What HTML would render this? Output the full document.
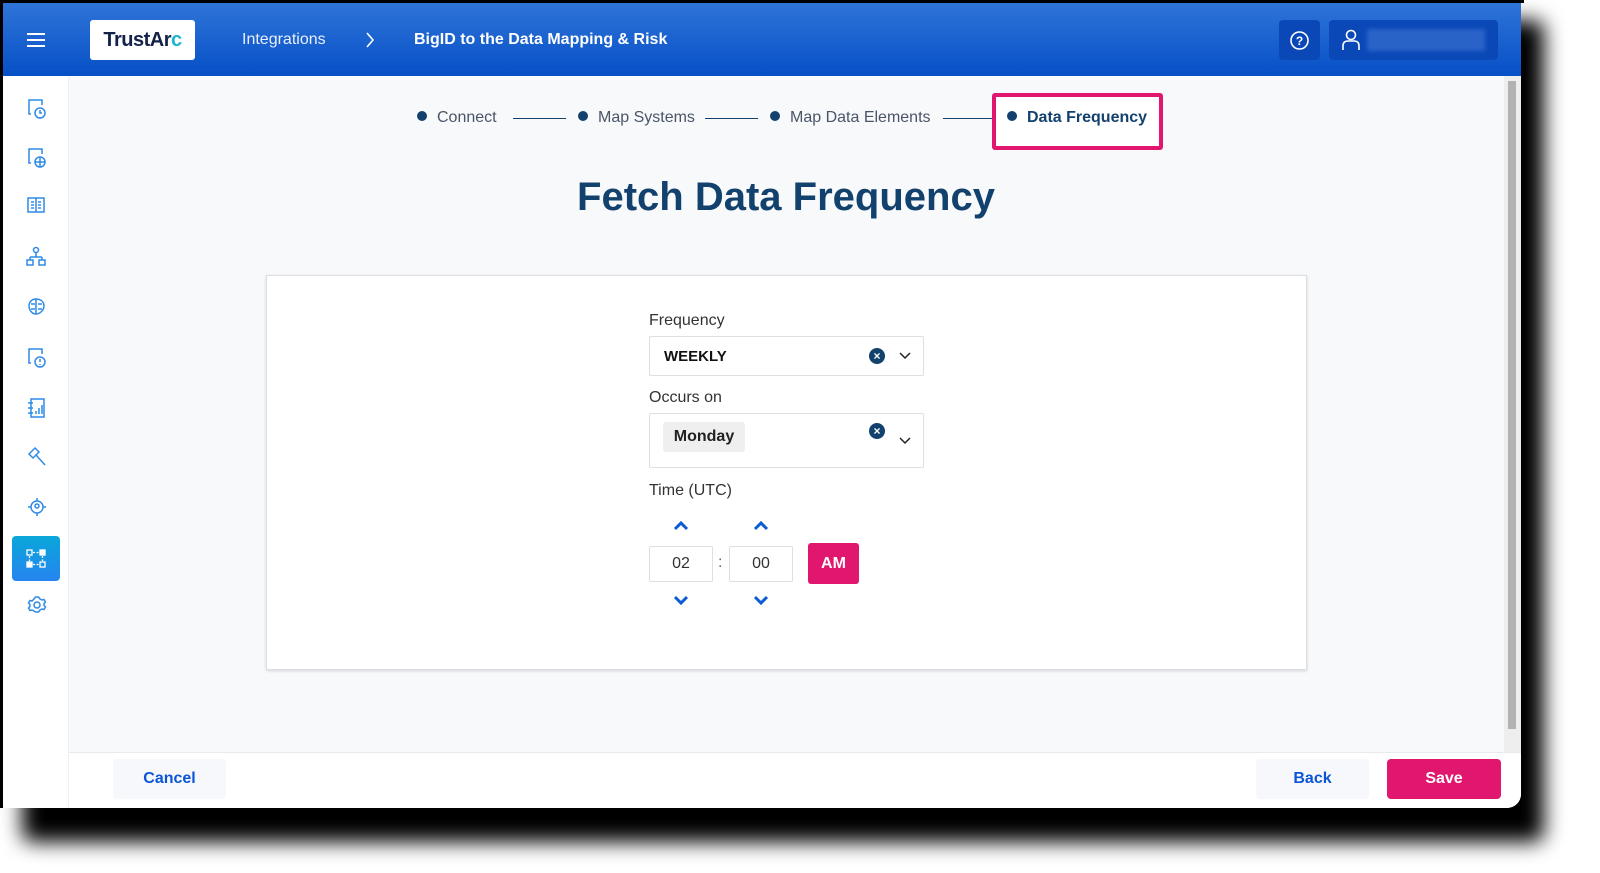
<!DOCTYPE html>
<html><head><meta charset="utf-8"><style>
*{box-sizing:border-box;margin:0;padding:0}
body{width:1600px;height:873px;background:#fff;position:relative;overflow:hidden;font-family:"Liberation Sans",sans-serif}
.shadow{position:absolute;left:22px;top:20px;width:1522px;height:822px;background:#000;filter:blur(10px);border-radius:10px}
.win{position:absolute;left:3px;top:3px;width:1518px;height:805px;background:#fff;border-bottom-right-radius:14px;border-bottom-left-radius:4px;overflow:hidden}
.topblack{position:absolute;left:0;top:0;width:1524px;height:3px;background:#000}
.leftblack{position:absolute;left:0;top:0;width:3px;height:808px;background:#000}
.hdr{position:absolute;left:0;top:0;width:1518px;height:73px;background:linear-gradient(#2f74d8,#0650c6)}
.logo{position:absolute;left:87px;top:17px;width:105px;height:40px;background:#fff;border-radius:3px;font-weight:bold;font-size:20px;color:#14224a;line-height:40px;text-align:center;letter-spacing:-0.5px}
.crumb{position:absolute;top:28px;color:#fff;font-size:16px}
.hb{position:absolute;top:17px;height:40px;background:#0a48b8;border-radius:4px}
.side{position:absolute;left:0;top:73px;width:66px;height:732px;background:#fff;border-right:1px solid #eef0f3}
.main{position:absolute;left:66px;top:73px;width:1436px;height:676px;background:#f8f9fb}
.sb{position:absolute;left:1501px;top:73px;width:17px;height:676px;background:#eeeeee}
.sb div{position:absolute;left:4px;top:5px;width:8px;height:648px;background:#b2b2b2}
.foot{position:absolute;left:66px;top:749px;width:1452px;height:56px;background:#fff;border-top:1px solid #e8eaee}
.btn{position:absolute;top:756px;height:40px;border-radius:4px;font-weight:bold;font-size:16px;text-align:center;line-height:40px}
.step{position:absolute;top:106px;font-size:16px;color:#4a5568}
.dot{display:inline-block;width:10px;height:10px;border-radius:50%;background:#13416e;margin-right:10px;vertical-align:1px}
.line{position:absolute;top:115px;height:1px;background:#13416e}
.card{position:absolute;left:263px;top:272px;width:1041px;height:395px;background:#fff;border:1px solid #dcdfe3;box-shadow:0 1px 3px rgba(0,0,0,.15)}
.lbl{position:absolute;font-size:16px;color:#333}
.inp{position:absolute;background:#fff;border:1px solid #dcdfe3;border-radius:2px}
.x{position:absolute;width:16px;height:16px;border-radius:50%;background:#13416e;color:#fff;font-size:12px;line-height:16px;text-align:center;font-weight:bold}
</style></head><body>
<div class="shadow"></div>
<div class="win">
<div class="hdr">
 <svg style="position:absolute;left:23px;top:29px" width="20" height="16"><path d="M1 2H19M1 8H19M1 14H19" stroke="#fff" stroke-width="2"/></svg>
 <div class="logo">TrustAr<span style="color:#19b5d1">c</span></div>
 <div class="crumb" style="left:239px;opacity:.9">Integrations</div>
 <svg style="position:absolute;left:362px;top:29px" width="10" height="16"><path d="M2 1L8 8L2 15" stroke="#fff" stroke-width="1.6" fill="none"/></svg>
 <div class="crumb" style="left:411px;font-weight:bold">BigID to the Data Mapping &amp; Risk</div>
 <div class="hb" style="left:1276px;width:41px"><svg style="position:absolute;left:10px;top:10px" width="21" height="21"><circle cx="10.5" cy="10.5" r="8.5" stroke="#fff" stroke-width="1.6" fill="none"/><text x="10.5" y="15" fill="#fff" font-size="12" font-weight="bold" text-anchor="middle" font-family="Liberation Sans">?</text></svg></div>
 <div class="hb" style="left:1326px;width:169px"><svg style="position:absolute;left:12px;top:9px" width="20" height="22"><circle cx="10" cy="6" r="4.5" stroke="#fff" stroke-width="1.6" fill="none"/><path d="M2 21V17Q2 12 7 12H13Q18 12 18 17V21" stroke="#fff" stroke-width="1.6" fill="none"/></svg><div style="position:absolute;left:38px;top:9px;width:118px;height:22px;background:#2a63c8;filter:blur(2px)"></div></div>
</div>
<div class="side">
 <svg width="66" height="560" fill="none" stroke="#2f8be6" stroke-width="1.5">
  <g transform="translate(24,22)"><path d="M4 16H2V2H15V7"/><circle cx="13" cy="15" r="5"/><path d="M13 12V15H15"/></g>
  <g transform="translate(24,71)"><path d="M4 16H2V2H15V7"/><circle cx="13" cy="15" r="5"/><path d="M8 15H18M13 10V20"/></g>
  <g transform="translate(25,122)"><rect x="0" y="0" width="16" height="14"/><path d="M8 0V14M3 4H6M3 7H6M3 10H6M10 4H13M10 7H13M10 10H13"/></g>
  <g transform="translate(24,171)"><circle cx="9" cy="3" r="2.5"/><path d="M9 6V10M3 10H15M3 10V13M15 10V13"/><rect x="0" y="13" width="6" height="5"/><rect x="12" y="13" width="6" height="5"/></g>
  <g transform="translate(25,222)"><path d="M8 1C3 1 1 5 1 8C1 12 4 16 8 16C12 16 16 12 16 8C16 4 13 1 8 1ZM8 1V16M3 6H7M10 6H14M3 11H7M10 11H14"/></g>
  <g transform="translate(24,271)"><path d="M4 16H2V2H15V7"/><circle cx="13" cy="15" r="5"/><path d="M13 12V15M13 17V18"/></g>
  <g transform="translate(24,322)"><path d="M4 1H17V19H4ZM1 5H6M1 10H6M1 15H6M9 16V13M12 16V10M15 16V7"/></g>
  <g transform="translate(24,371)"><path d="M2 7L8 1L12 5L6 11ZM9 8L18 18"/></g>
  <g transform="translate(24,421)"><circle cx="10" cy="10" r="6"/><circle cx="10" cy="9" r="2"/><path d="M10 1V4M10 16V19M1 10H4M16 10H19"/></g>
  <g transform="translate(24,520)"><path d="M9 3l1.5-2h3L15 3l2 1 2-.5 1.5 2.5-1.5 1.5v2l1.5 1.5-1.5 2.5-2-.5-2 1-1.5 2h-3L9 15l-2-1-2 .5L3.5 12 5 10.5v-2L3.5 7 5 4.5l2 .5z" transform="translate(-2,0)"/><circle cx="10" cy="9" r="3"/></g>
 </svg>
 <div style="position:absolute;left:9px;top:460px;width:48px;height:45px;border-radius:4px;background:linear-gradient(#09a7d8,#2684f0)"><svg style="position:absolute;left:14px;top:13px" width="20" height="19" fill="#fff" stroke="#fff" stroke-width="1.3"><rect x="1" y="1" width="5" height="5" fill="none"/><rect x="14" y="1" width="5" height="5"/><rect x="1" y="13" width="5" height="5"/><rect x="14" y="13" width="5" height="5" fill="none"/><path d="M7 3.5H13M7 15.5H13M3.5 7V12M16.5 7V12" stroke-dasharray="2 1.5"/></svg></div>
</div>
<div class="main"></div>
<div class="sb"><div></div></div>
<div class="step" style="left:414px"><span class="dot"></span>Connect</div>
<div class="line" style="left:510px;width:53px"></div>
<div class="step" style="left:575px"><span class="dot"></span>Map Systems</div>
<div class="line" style="left:702px;width:53px"></div>
<div class="step" style="left:767px"><span class="dot"></span>Map Data Elements</div>
<div class="line" style="left:940px;width:50px"></div>
<div style="position:absolute;left:989px;top:90px;width:171px;height:57px;border:4px solid #e1176f;border-radius:3px;background:#fff"></div>
<div class="step" style="left:1004px;color:#13416e;font-weight:bold"><span class="dot"></span>Data Frequency</div>
<div style="position:absolute;left:0;top:172px;width:1566px;text-align:center;font-size:40px;font-weight:bold;color:#13416e">Fetch Data Frequency</div>
<div class="card"></div>
<div class="lbl" style="left:646px;top:309px">Frequency</div>
<div class="inp" style="left:646px;top:333px;width:275px;height:40px"><span style="position:absolute;left:14px;top:11px;font-size:15px;font-weight:bold;color:#111">WEEKLY</span><div class="x" style="left:219px;top:11px">×</div><svg style="position:absolute;left:249px;top:15px" width="12" height="8"><path d="M1 1L6 6L11 1" stroke="#222" stroke-width="1.5" fill="none"/></svg></div>
<div class="lbl" style="left:646px;top:386px">Occurs on</div>
<div class="inp" style="left:646px;top:410px;width:275px;height:55px"><span style="position:absolute;left:13px;top:8px;width:82px;height:30px;background:#efefef;border-radius:3px;font-size:16px;font-weight:bold;color:#222;line-height:30px;text-align:center">Monday</span><div class="x" style="left:219px;top:9px">×</div><svg style="position:absolute;left:249px;top:23px" width="12" height="8"><path d="M1 1L6 6L11 1" stroke="#222" stroke-width="1.5" fill="none"/></svg></div>
<div class="lbl" style="left:646px;top:479px">Time (UTC)</div>
<svg style="position:absolute;left:670px;top:518px" width="16" height="10"><path d="M2 8L8 2L14 8" stroke="#0b5ad9" stroke-width="3" fill="none"/></svg>
<svg style="position:absolute;left:750px;top:518px" width="16" height="10"><path d="M2 8L8 2L14 8" stroke="#0b5ad9" stroke-width="3" fill="none"/></svg>
<svg style="position:absolute;left:670px;top:592px" width="16" height="10"><path d="M2 2L8 8L14 2" stroke="#0b5ad9" stroke-width="3" fill="none"/></svg>
<svg style="position:absolute;left:750px;top:592px" width="16" height="10"><path d="M2 2L8 8L14 2" stroke="#0b5ad9" stroke-width="3" fill="none"/></svg>
<div class="inp" style="left:646px;top:543px;width:64px;height:36px;text-align:center;line-height:34px;font-size:16px;color:#333">02</div>
<div style="position:absolute;left:715px;top:551px;color:#666">:</div>
<div class="inp" style="left:726px;top:543px;width:64px;height:36px;text-align:center;line-height:34px;font-size:16px;color:#333">00</div>
<div style="position:absolute;left:805px;top:540px;width:51px;height:41px;background:#e1176f;border-radius:3px;color:#fff;font-weight:bold;font-size:16px;text-align:center;line-height:41px">AM</div>
<div class="foot"></div>
<div class="btn" style="left:110px;width:113px;background:#f7f8fb;color:#0b55d6">Cancel</div>
<div class="btn" style="left:1253px;width:113px;background:#f7f8fb;color:#0b55d6">Back</div>
<div class="btn" style="left:1384px;width:114px;background:#e1176f;color:#fff">Save</div>
</div>
<div class="topblack"></div><div class="leftblack"></div>
</body></html>
